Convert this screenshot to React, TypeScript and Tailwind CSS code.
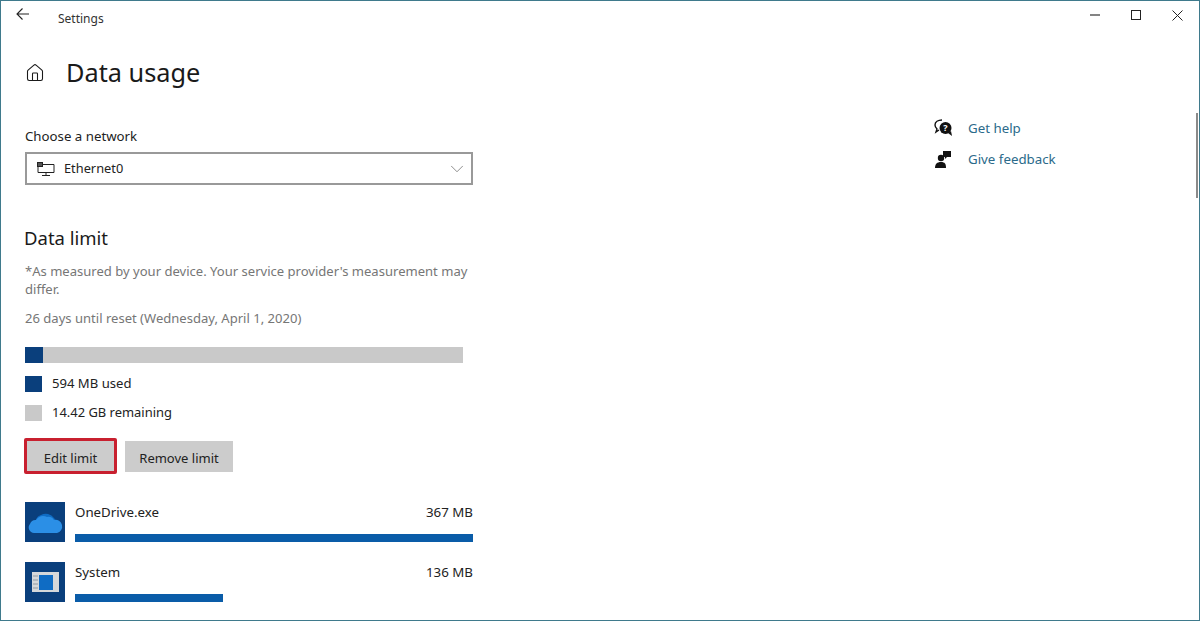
import { ChevronDown, Home } from "lucide-react";

const apps = [
  { name: "OneDrive.exe", size: "367 MB", bar: "w-full", icon: "cloud" },
  { name: "System", size: "136 MB", bar: "w-[148px]", icon: "system" },
];

function CloudIcon() {
  return (
    <svg viewBox="0 0 40 40" className="h-10 w-10 bg-[#0a3f7c]">
      <path d="M11 24a8 8 0 0 1 5-11 10 10 0 0 1 13 3 7 7 0 0 1 1 8z" fill="#0f6cc4" />
      <path d="M9 33a5.500 5.500 0 0 1-4-9 6 6 0 0 1 6-4 8 8 0 0 1 11-3 7 7 0 0 1 7 3 6.500 6.500 0 0 1 3 13z" fill="#2b8fe6" transform="translate(0 -2)" />
    </svg>
  );
}

function SystemIcon() {
  return (
    <svg viewBox="0 0 40 40" className="h-10 w-10 bg-[#0a3f7c]">
      <rect x="7" y="10" width="27" height="20" fill="#d5d8da" />
      <rect x="14" y="13" width="14" height="15" fill="#0f6cc4" />
      <path d="M8 14h5M8 18h5M8 22h5M8 26h5" stroke="#8f9aa3" strokeWidth="1" />
    </svg>
  );
}

function HelpIcon() {
  return (
    <svg viewBox="0 0 20 18" className="h-[18px] w-5">
      <path d="M8 1C4 1 1 3 1 6c0 2 1 3 2 4l-1 3 3-2" fill="none" stroke="#111" strokeWidth="1.400" />
      <circle cx="11.500" cy="9" r="6" fill="#111" />
      <path d="M14 14l4 3-1-5z" fill="#111" />
      <text x="11.500" y="12" textAnchor="middle" fontSize="9" fontWeight="700" fill="#fff">?</text>
    </svg>
  );
}

function FeedbackIcon() {
  return (
    <svg viewBox="0 0 16 17" className="h-[17px] w-4">
      <circle cx="6" cy="7" r="3.200" fill="#111" />
      <path d="M0 17c0-4 2-6 6-6s5 2 5 6z" fill="#111" />
      <path d="M8 0h8v6h-4l-2 2V6H8z" fill="#111" />
    </svg>
  );
}

export default function App() {
  return (
    <div className="relative flex h-[621px] w-[1200px] flex-col overflow-hidden border border-[#3f7a8c] bg-white font-['Noto_Sans',sans-serif] text-[#1a1a1a]">
      <div className="flex h-[31px] shrink-0 items-center">
        <div className="flex w-[57px] justify-start pb-[5px] pl-[15px]">
          <svg viewBox="0 0 13 12" className="h-3 w-[13px]" fill="none" stroke="#222" strokeWidth="1.100">
            <path d="M13 6H1M6.500 .5 1 6l5.500 5.500" />
          </svg>
        </div>
        <span className="mt-[4px] text-[12px] text-[#333]">Settings</span>
        <div className="ml-auto flex items-center gap-[31px] pb-[3px] pr-[16px]">
          <svg viewBox="0 0 10 10" className="h-[10px] w-[10px]" fill="none" stroke="#333" strokeWidth="1.200">
            <path d="M0 5h10" />
          </svg>
          <svg viewBox="0 0 10 10" className="h-[10px] w-[10px]" fill="none" stroke="#222" strokeWidth="1">
            <rect x="0.500" y="0.500" width="9" height="9" />
          </svg>
          <svg viewBox="0 0 11 11" className="h-[11px] w-[11px]" fill="none" stroke="#222" strokeWidth="1">
            <path d="M.5 .5l10 10M10.500 .5l-10 10" />
          </svg>
        </div>
      </div>

      <div className="flex min-h-0 flex-1">
        <div className="w-[933px] shrink-0 pl-[24px]">
          <div className="mt-[19px] flex h-[44px] items-center">
            <Home className="h-[20px] w-[20px]" strokeWidth={1.300} />
            <h1 className="ml-[21px] text-[25.300px] font-normal text-[#1a1a1a]">Data usage</h1>
          </div>

          <div className="w-[448px]">
            <p className="mt-[31px] text-[13.250px] leading-5 text-[#222]">Choose a network</p>
            <div className="mt-[6px] flex h-[33px] items-center border-2 border-[#999] px-[10px]">
              <svg viewBox="0 0 18 16" className="h-4 w-[18px]" fill="none" stroke="#222" strokeWidth="1">
                <rect x="0.500" y="1.500" width="5" height="4" fill="#555" />
                <path d="M6 3.500h11v8H1V6M9 11.500v3M5 14.500h8" />
              </svg>
              <span className="ml-[9px] text-[12.800px] text-[#222]">Ethernet0</span>
              <ChevronDown className="ml-auto mr-[-7px] h-[22px] w-[22px] text-[#666]" strokeWidth={0.800} />
            </div>

            <h2 className="-ml-[1px] mt-[39px] text-[18.500px] font-normal leading-7 text-[#1a1a1a]">Data limit</h2>
            <p className="mt-[10px] text-[13.060px] leading-[18px] text-[#767676]">
              *As measured by your device. Your service provider's measurement may differ.
            </p>
            <p className="mt-[11px] text-[13.060px] leading-[18px] text-[#767676]">26 days until reset (Wednesday, April 1, 2020)</p>

            <div className="mt-[20px] h-4 w-[438px] bg-[#c9c9c9]">
              <div className="h-4 w-[18px] bg-[#0a3f7c]" />
            </div>
            <div className="mt-[13px] flex h-4 items-center">
              <div className="h-4 w-[17px] bg-[#0a3f7c]" />
              <span className="ml-[10px] text-[13.100px] text-[#222]">594 MB used</span>
            </div>
            <div className="mt-[13px] flex h-4 items-center">
              <div className="h-4 w-[17px] bg-[#c9c9c9]" />
              <span className="ml-[10px] text-[12.950px] text-[#222]">14.42 GB remaining</span>
            </div>

            <div className="-ml-[1px] mt-[17px] flex items-center">
              <button className="flex h-[36px] w-[93px] items-center justify-center rounded-[2px] border-[3px] border-[#c8202f] bg-[#cccccc] pt-[5px] text-[13px] text-[#222]">
                Edit limit
              </button>
              <button className="ml-[8px] h-[31px] w-[108px] bg-[#cccccc] pt-[5px] text-[13px] text-[#222]">Remove limit</button>
            </div>

            <div className="mt-[28px] flex flex-col gap-[20px]">
              {apps.map((app) => (
                <div key={app.name} className="flex h-10">
                  {app.icon === "cloud" ? <CloudIcon /> : <SystemIcon />}
                  <div className="ml-[10px] flex flex-1 flex-col">
                    <div className="flex h-[22px] items-center justify-between text-[13.300px] text-[#222]">
                      <span>{app.name}</span>
                      <span>{app.size}</span>
                    </div>
                    <div className="mt-auto h-2 w-full">
                      <div className={`h-2 bg-[#0a5ca8] ${app.bar}`} />
                    </div>
                  </div>
                </div>
              ))}
            </div>
          </div>
        </div>

        <div className="pt-[85px] text-[13.300px] text-[#2b6a8a]">
          <div className="flex h-[22px] items-center">
            <HelpIcon />
            <span className="ml-[14px] pt-[1px]">Get help</span>
          </div>
          <div className="mt-[9px] flex h-[22px] items-center">
            <div className="flex w-5 justify-start pl-[1px]">
              <FeedbackIcon />
            </div>
            <span className="ml-[14px] pt-[1px]">Give feedback</span>
          </div>
        </div>
      </div>

      <div className="absolute right-[1px] top-[112px] h-[85px] w-[2px] bg-[#8a8a8a]" />
    </div>
  );
}
